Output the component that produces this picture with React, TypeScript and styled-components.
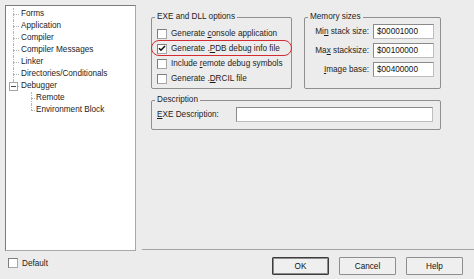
import React from 'react';
import styled, { createGlobalStyle } from 'styled-components';

const GlobalStyle = createGlobalStyle`
  html, body {
    margin: 0;
    padding: 0;
    background: #ececec;
  }
  body {
    font-family: "Liberation Sans", Arial, sans-serif;
    font-size: 8.2px;
    color: #1c1c1c;
  }
`;

const Dialog = styled.div`
  width: 474px;
  height: 279px;
  box-sizing: border-box;
  padding: 5px 0 0 5px;
  display: flex;
  flex-direction: column;
  background: #ececec;
  overflow: hidden;
`;

const Body = styled.div`
  display: grid;
  grid-template-columns: 131px 1fr;
  column-gap: 6px;
  height: 246px;
  align-items: start;
`;

const Tree = styled.ul`
  margin: 0;
  padding: 2px 0 0 0;
  list-style: none;
  background: #fff;
  height: 246px;
  box-sizing: border-box;
  border: 1px solid #a8a8a8;
  border-top-color: #7c7c7c;
  border-left-color: #7c7c7c;
`;

const TreeRow = styled.li<{ $level: number; $last?: boolean; $lineX: number }>`
  position: relative;
  height: 12px;
  line-height: 12px;
  padding-left: ${(p) => (p.$level === 0 ? 15 : 30)}px;
  white-space: nowrap;

  &::before {
    content: '';
    position: absolute;
    left: ${(p) => p.$lineX}px;
    top: 0;
    height: ${(p) => (p.$last ? '6px' : '12px')};
    border-left: 1px dotted #b4b4b4;
  }
  &::after {
    content: '';
    position: absolute;
    left: ${(p) => p.$lineX}px;
    top: 6px;
    width: 6px;
    border-top: 1px dotted #b4b4b4;
  }
`;

const Expander = styled.span`
  position: absolute;
  left: 3px;
  top: 2px;
  width: 7px;
  height: 7px;
  background: #fff;
  border: 1px solid #a4a4a4;
  z-index: 1;

  &::after {
    content: '';
    position: absolute;
    left: 1px;
    right: 1px;
    top: 3px;
    height: 1px;
    background: #444;
  }
`;

const Page = styled.div`
  display: flex;
  flex-direction: column;
  gap: 6px;
  height: 245px;
  box-sizing: border-box;
  padding: 7px 0 0 9px;
  border-bottom: 1px solid #a4a4a4;
`;

const GroupRow = styled.div`
  display: flex;
  gap: 12px;
`;

const Group = styled.fieldset<{ $width: number }>`
  margin: 0;
  padding: 0 5px;
  width: ${(p) => p.$width}px;
  box-sizing: border-box;
  min-width: 0;
  border: 1px solid #8f8f8f;
  border-radius: 2px;
`;

const Legend = styled.legend`
  padding: 0 2px;
  margin-left: -2px;
  line-height: 10px;
  height: 10px;
`;

const OptionList = styled.div`
  display: flex;
  flex-direction: column;
  padding: 4px 0 2px;
`;

const CheckRow = styled.label`
  position: relative;
  display: flex;
  align-items: center;
  gap: 4px;
  height: 15px;
  white-space: nowrap;
`;

const Box = styled.span`
  width: 10px;
  height: 10px;
  box-sizing: border-box;
  flex: none;
  background: #fff;
  border: 1px solid #7d7d7d;
  border-right-color: #a6a6a6;
  border-bottom-color: #a6a6a6;
  display: flex;
  align-items: center;
  justify-content: center;
`;

const Highlight = styled.span`
  position: absolute;
  left: -6px;
  right: -6px;
  top: -1px;
  bottom: 0;
  border: 1.5px solid #d52a32;
  border-radius: 8px;
  pointer-events: none;
`;

const FieldGrid = styled.div<{ $label: number; $input: number; $gap: number }>`
  display: grid;
  grid-template-columns: ${(p) => p.$label}px ${(p) => p.$input}px;
  column-gap: ${(p) => p.$gap}px;
  row-gap: 4px;
  align-items: center;
`;

const FieldLabel = styled.span<{ $align?: string }>`
  text-align: ${(p) => p.$align || 'right'};
  white-space: nowrap;
`;

const TextBox = styled.div`
  height: 15px;
  box-sizing: border-box;
  background: #fff;
  border: 1px solid #8a8a8a;
  border-right-color: #bdbdbd;
  border-bottom-color: #bdbdbd;
  line-height: 13px;
  padding-left: 3px;
  color: #111;
`;

const MemoryGrid = styled(FieldGrid)`
  padding: 2px 0 10px;
`;

const DescGrid = styled(FieldGrid)`
  padding: 2px 0 7px;
`;

const Footer = styled.div`
  display: flex;
  align-items: flex-start;
  justify-content: space-between;
  padding: 6px 11px 0 3px;
`;

const FooterCheck = styled(CheckRow)`
  height: 10px;
  margin-top: 1px;
`;

const Buttons = styled.div`
  display: flex;
  gap: 10px;
`;

const Button = styled.button<{ $default?: boolean }>`
  width: 57px;
  height: 18px;
  margin: 0;
  padding: 0;
  font: inherit;
  color: #111;
  background: #efefef;
  border: 1px solid ${(p) => (p.$default ? '#3d3d3d' : '#8e8e8e')};
  box-shadow: ${(p) => (p.$default ? 'inset 0 0 0 1px #8c8c8c' : 'none')};
  border-radius: 1px;
`;

const Check = () => (
  <svg width="8" height="7" viewBox="0 0 8 7">
    <path d="M1 3.2 L3 5.2 L7 1" fill="none" stroke="#111" strokeWidth="1.6" />
  </svg>
);

type Node = { label: string; level: number; last?: boolean; expander?: boolean };

const nodes: Node[] = [
  { label: 'Forms', level: 0 },
  { label: 'Application', level: 0 },
  { label: 'Compiler', level: 0 },
  { label: 'Compiler Messages', level: 0 },
  { label: 'Linker', level: 0 },
  { label: 'Directories/Conditionals', level: 0 },
  { label: 'Debugger', level: 0, last: true, expander: true },
  { label: 'Remote', level: 1 },
  { label: 'Environment Block', level: 1, last: true },
];

export default function App() {
  return (
    <>
      <GlobalStyle />
      <Dialog>
        <Body>
          <Tree>
            {nodes.map((n) => (
              <TreeRow key={n.label} $level={n.level} $last={n.last} $lineX={n.level === 0 ? 7 : 25}>
                {n.expander && <Expander />}
                {n.label}
              </TreeRow>
            ))}
          </Tree>
          <Page>
            <GroupRow>
              <Group $width={141}>
                <Legend>EXE and DLL options</Legend>
                <OptionList>
                  <CheckRow>
                    <Box />
                    <span>Generate <u>c</u>onsole application</span>
                  </CheckRow>
                  <CheckRow>
                    <Highlight />
                    <Box>
                      <Check />
                    </Box>
                    <span>Generate .<u>P</u>DB debug info file</span>
                  </CheckRow>
                  <CheckRow>
                    <Box />
                    <span>Include <u>r</u>emote debug symbols</span>
                  </CheckRow>
                  <CheckRow>
                    <Box />
                    <span>Generate .<u>D</u>RCIL file</span>
                  </CheckRow>
                </OptionList>
              </Group>
              <Group $width={137}>
                <Legend>Memory sizes</Legend>
                <MemoryGrid $label={59} $input={61} $gap={4}>
                  <FieldLabel>Mi<u>n</u> stack size:</FieldLabel>
                  <TextBox>$00001000</TextBox>
                  <FieldLabel>Ma<u>x</u> stacksize:</FieldLabel>
                  <TextBox>$00100000</TextBox>
                  <FieldLabel><u>I</u>mage base:</FieldLabel>
                  <TextBox>$00400000</TextBox>
                </MemoryGrid>
              </Group>
            </GroupRow>
            <Group $width={290}>
              <Legend>Description</Legend>
              <DescGrid $label={79} $input={197} $gap={0}>
                <FieldLabel $align="left"><u>E</u>XE Description:</FieldLabel>
                <TextBox />
              </DescGrid>
            </Group>
          </Page>
        </Body>
        <Footer>
          <FooterCheck>
            <Box />
            <span>Default</span>
          </FooterCheck>
          <Buttons>
            <Button $default>OK</Button>
            <Button>Cancel</Button>
            <Button>Help</Button>
          </Buttons>
        </Footer>
      </Dialog>
    </>
  );
}
